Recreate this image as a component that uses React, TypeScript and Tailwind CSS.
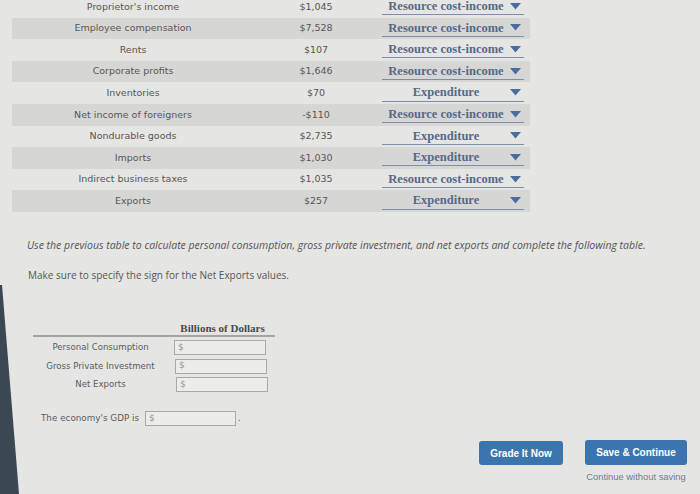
import React from "react";

const rows: [string, string, string][] = [
  ["Proprietor's income", "$1,045", "Resource cost-income"],
  ["Employee compensation", "$7,528", "Resource cost-income"],
  ["Rents", "$107", "Resource cost-income"],
  ["Corporate profits", "$1,646", "Resource cost-income"],
  ["Inventories", "$70", "Expenditure"],
  ["Net income of foreigners", "-$110", "Resource cost-income"],
  ["Nondurable goods", "$2,735", "Expenditure"],
  ["Imports", "$1,030", "Expenditure"],
  ["Indirect business taxes", "$1,035", "Resource cost-income"],
  ["Exports", "$257", "Expenditure"],
];

function Dropdown({ value }: { value: string }) {
  return (
    <div className="flex h-[17px] w-[142px] items-center border-b-[1.5px] border-[#7d90ab]">
      <span
        className="flex-1 pl-[2px] text-center text-[12.5px] font-bold leading-none text-[#56698a]"
        style={{ fontFamily: '"Liberation Serif", "DejaVu Serif", serif' }}
      >
        {value}
      </span>
      <svg width="11" height="7" viewBox="0 0 11 7" className="ml-[2px] mr-[3px]">
        <polygon points="0,0 11,0 5.5,6.5" fill="#4a6c9e" />
      </svg>
    </div>
  );
}

function MoneyBox({ w = 92 }: { w?: number }) {
  return (
    <div
      className="flex h-[15px] items-center border border-[#a9a9a7] bg-[#ecece9] pl-[3px] text-[9px] text-[#8b9a92]"
      style={{ width: w }}
    >
      $
    </div>
  );
}

export default function App() {
  const sans = { fontFamily: '"DejaVu Sans", Verdana, sans-serif' };
  return (
    <div
      className="relative h-[494px] w-[700px] overflow-hidden bg-[#e5e5e3] text-[#565656]"
      style={sans}
    >
      {/* top table */}
      <div className="ml-[12px] mt-[-4px] w-[518px]">
        {rows.map((r, i) => (
          <div
            key={i}
            className={`flex h-[21.6px] items-center ${i % 2 === 1 ? "bg-[#d6d6d5]" : ""}`}
          >
            <div className="w-[242px] text-center text-[9.5px]">{r[0]}</div>
            <div className="w-[124px] text-center text-[9.5px]">{r[1]}</div>
            <div className="ml-[4px] flex w-[142px] items-start">
              <Dropdown value={r[2]} />
            </div>
          </div>
        ))}
      </div>

      <p
        className="ml-[27px] mt-[26px] whitespace-nowrap text-[10.5px] italic leading-[14px] text-[#555]"
        style={{ fontFamily: '"Open Sans", "Noto Sans", sans-serif' }}
      >
        Use the previous table to calculate personal consumption, gross private investment, and net exports and complete the following table.
      </p>
      <p
        className="ml-[28px] mt-[16px] text-[10px] leading-[14px] text-[#555]"
        style={{ fontFamily: '"Open Sans", "Noto Sans", sans-serif' }}
      >
        Make sure to specify the sign for the Net Exports values.
      </p>

      {/* second table */}
      <div className="ml-[33px] mt-[39px] w-[242px]">
        <div className="flex h-[16px] items-start border-b-2 border-[#a3a3a2]">
          <div className="w-[137px]" />
          <div
            className="w-[105px] text-center text-[11px] font-bold leading-[14px] text-[#4a4a4a]"
            style={{ fontFamily: '"Liberation Serif", "DejaVu Serif", serif' }}
          >
            Billions of Dollars
          </div>
        </div>
        {["Personal Consumption", "Gross Private Investment", "Net Exports"].map((l, i) => (
          <div key={i} className="mt-[3px] flex h-[15.5px] items-center">
            <div className="w-[137px] pr-[2px] text-center text-[8.6px] text-[#5c5c5c]">{l}</div>
            <div className={i === 0 ? "ml-[4px]" : i === 1 ? "ml-[5px]" : "ml-[6px]"}>
              <MoneyBox />
            </div>
          </div>
        ))}
      </div>

      {/* GDP */}
      <div className="ml-[41px] mt-[19px] flex h-[15px] items-center text-[8.8px] text-[#5c5c5c]">
        <span>The economy's GDP is</span>
        <div className="ml-[6px]">
          <MoneyBox w={91} />
        </div>
        <span className="ml-[2px]">.</span>
      </div>

      {/* buttons */}
      <div
        className="mr-[13px] mt-[14px] flex justify-end gap-[22px]"
        style={{ fontFamily: '"Liberation Sans", Arial, sans-serif' }}
      >
        <div className="mt-[1px] flex h-[24px] w-[84px] items-center justify-center rounded-[3px] bg-[#3c75ad] text-[10px] font-bold text-white">
          Grade It Now
        </div>
        <div className="flex flex-col items-center">
          <div className="flex h-[25px] w-[102px] items-center justify-center rounded-[3px] bg-[#3c75ad] text-[10px] font-bold text-white">
            Save &amp; Continue
          </div>
          <div className="mt-[5px] text-[9.4px] text-[#6f7d8e]">Continue without saving</div>
        </div>
      </div>

      {/* photo bezel wedge */}
      <svg
        className="absolute left-0 top-0"
        width="24"
        height="494"
        viewBox="0 0 24 494"
      >
        <polygon points="0,285 2,285 19,494 0,494" fill="#3b4752" />
      </svg>
    </div>
  );
}
